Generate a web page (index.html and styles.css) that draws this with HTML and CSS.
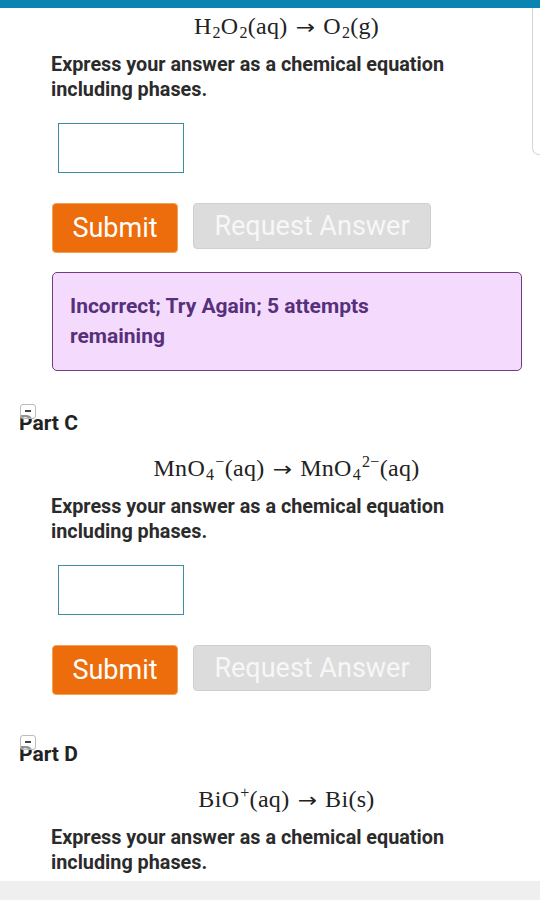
FILE: index.html
```html
<!DOCTYPE html>
<html>
<head>
<meta charset="utf-8">
<link rel="stylesheet" href="styles.css">
</head>
<body>
<div class="topbar"></div>
<div class="edge"></div>
<main class="page">
  <section class="part">
    <div class="eq">H<sub>2</sub>O<sub>2</sub>(aq) <span class="arr">→</span> O<sub>2</sub>(g)</div>
    <p class="prompt">Express your answer as a chemical equation including phases.</p>
    <div class="answer"></div>
    <div class="actions">
      <button class="btn submit">Submit</button>
      <button class="btn request">Request Answer</button>
    </div>
    <div class="feedback"><p class="feedback-text">Incorrect; Try Again; 5 attempts remaining</p></div>
  </section>

  <section class="part">
    <h2 class="part-title"><span class="toggle"></span>Part C</h2>
    <div class="eq">MnO<sub>4</sub><sup>−</sup>(aq) <span class="arr">→</span> MnO<sub>4</sub><sup>2−</sup>(aq)</div>
    <p class="prompt">Express your answer as a chemical equation including phases.</p>
    <div class="answer"></div>
    <div class="actions">
      <button class="btn submit">Submit</button>
      <button class="btn request">Request Answer</button>
    </div>
  </section>

  <section class="part part-after-actions">
    <h2 class="part-title"><span class="toggle"></span>Part D</h2>
    <div class="eq">BiO<sup>+</sup>(aq) <span class="arr">→</span> Bi(s)</div>
    <p class="prompt">Express your answer as a chemical equation including phases.</p>
  </section>
</main>
<div class="bottombar"></div>
</body>
</html>
```

FILE: styles.css
```css
* { box-sizing: border-box; }
html, body { margin: 0; padding: 0; }
body {
  width: 540px;
  height: 900px;
  overflow: hidden;
  background: #fff;
  font-family: Roboto, "Liberation Sans", sans-serif;
  color: #2b2b2b;
  position: relative;
}
.topbar {
  height: 8px;
  background: #0a84b1;
}
.edge {
  position: absolute;
  left: 532px;
  top: 8px;
  width: 12px;
  height: 147px;
  border-left: 1px solid #d4d4d4;
  border-bottom: 1px solid #d4d4d4;
  border-bottom-left-radius: 7px;
}
.page {
  padding: 0 18px 0 51px;
  height: 873px;
}
.eq {
  font-family: "Liberation Serif", "DejaVu Serif", serif;
  font-size: 24px;
  text-align: center;
  line-height: 30px;
  color: #222;
  letter-spacing: 0.3px;
}
.eq sub, .eq sup {
  font-size: 16px;
  line-height: 0;
}
.eq sub { vertical-align: -4px; margin-left: 1px; }
.eq sup { vertical-align: 9px; margin-left: 1px; }
.arr {
  font-family: "DejaVu Sans", sans-serif;
  font-size: 20px;
  display: inline-block;
  transform: scaleX(1.15);
  margin: 0 3px;
}
.part:first-child .eq { margin-top: 3px; }
.prompt {
  margin: 10px 0 0;
  font-size: 19.8px;
  font-weight: 700;
  line-height: 25px;
  width: 440px;
  color: #2b2b2b;
}
.answer {
  margin: 21px 0 0 7px;
  width: 126px;
  height: 50px;
  border: 1px solid #3c8da0;
}
.actions {
  display: flex;
  align-items: flex-start;
  gap: 15px;
  margin-top: 30px;
  margin-left: 1px;
}
.btn {
  font-family: Roboto, "Liberation Sans", sans-serif;
  font-size: 27px;
  color: #fff;
  border-radius: 4px;
  padding: 0;
}
.submit {
  width: 126px;
  height: 50px;
  background: #ed6c0b;
  border: 1px solid #f0a55a;
}
.request {
  width: 238px;
  height: 46px;
  background: #dcdcdc;
  border: 1px solid #cfcfcf;
  color: #f7f7f7;
}
.feedback {
  margin: 19px 0 0 1px;
  width: 470px;
  height: 99px;
  background: #f4dbfd;
  border: 1px solid #6e3d82;
  border-radius: 5px;
  padding: 18px 17px 0;
}
.feedback-text {
  margin: 0;
  max-width: 350px;
  font-size: 21px;
  font-weight: 700;
  line-height: 30px;
  color: #56307a;
}
.part-title {
  position: relative;
  margin: 37px 0 0 -32px;
  font-size: 21px;
  font-weight: 700;
  line-height: 30px;
  color: #222;
}
.part-after-actions .part-title { margin-top: 44px; }
.part-title .toggle {
  position: absolute;
  left: 1px;
  top: -4px;
  width: 16px;
  height: 15px;
  border: 1px solid #bcbcbc;
  border-radius: 3px;
  background: rgba(255,255,255,0.5);
}
.part-title .toggle::after {
  content: "";
  position: absolute;
  left: 4px;
  top: 5px;
  width: 6px;
  height: 2px;
  background: #444;
}
.part .part-title + .eq { margin-top: 15px; }
.bottombar {
  position: absolute;
  left: 0;
  right: 0;
  bottom: 0;
  height: 19px;
  background: #efefef;
}
```
